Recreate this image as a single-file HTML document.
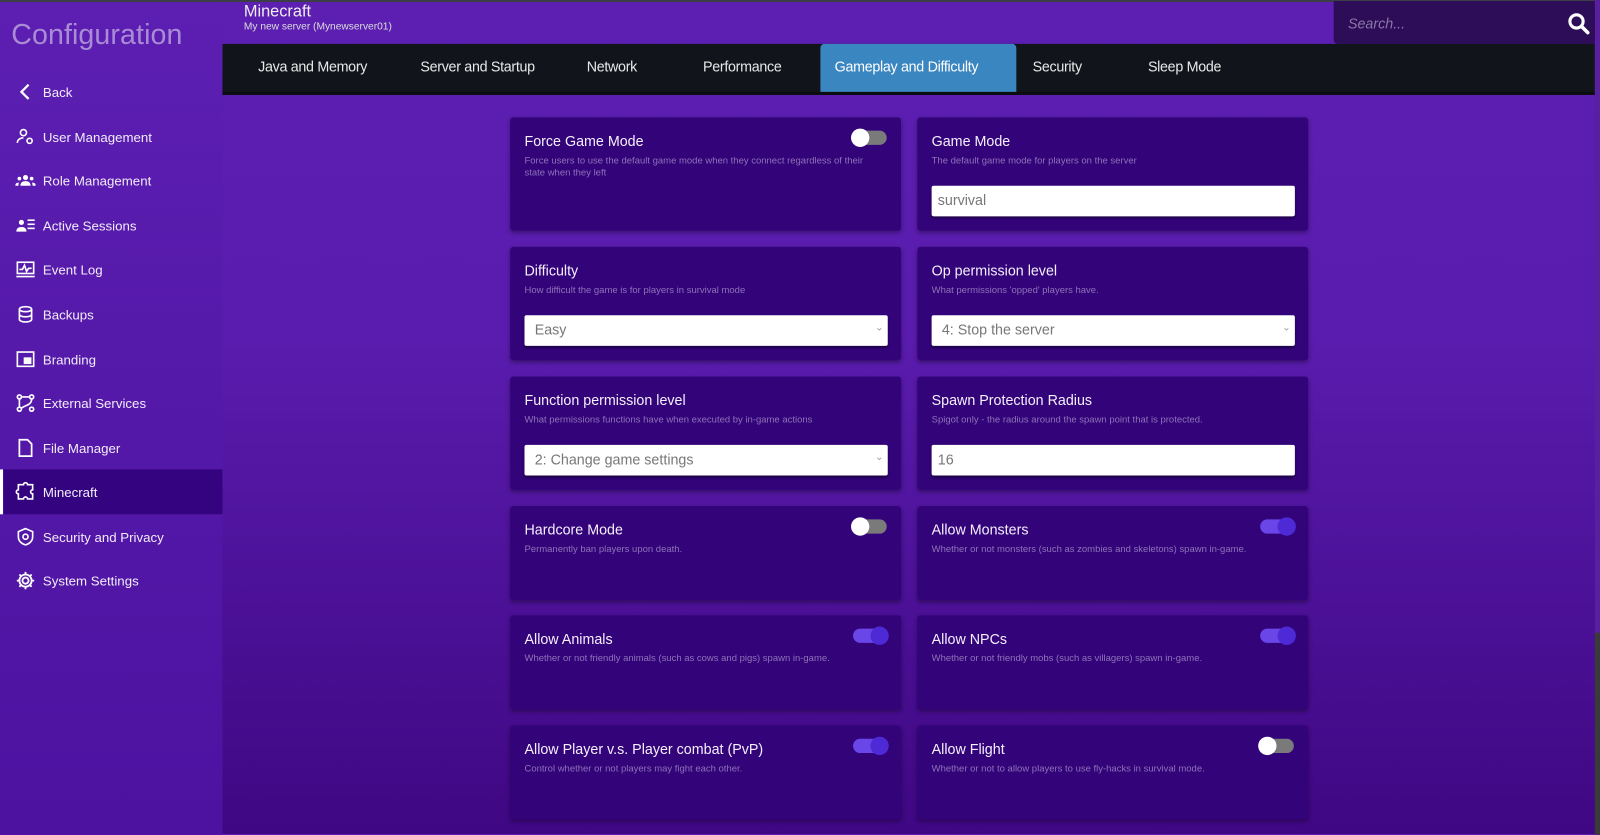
<!DOCTYPE html>
<html><head><meta charset="utf-8"><style>
*{box-sizing:border-box;margin:0;padding:0}
html,body{width:1600px;height:834px;overflow:hidden}
body{font-family:"Liberation Sans",sans-serif;background:linear-gradient(#5c1fb2 0%,#5a1cae 40%,#3f0783 100%);color:#fff}
#w{position:absolute;left:0;top:0;width:1568px;height:818px;transform:scale(1.0204);transform-origin:0 0}
.topline{position:absolute;left:0;top:0;width:1568px;height:2px;background:#3d3d48}
.sb{position:absolute;left:0;top:0;width:218px;height:818px;background:linear-gradient(#5c1fb2,#4d12a0)}
.cfg{position:absolute;left:11px;top:18px;font-size:28px;color:#a98bd6;letter-spacing:.1px;font-weight:300}
.nav{position:absolute;left:0;width:218px;height:44px;display:flex;align-items:center;font-size:13px;color:#f2ecfa}
.nav svg{position:absolute;left:15px;width:20px;height:20px}
.nav span{position:absolute;left:42px}
.nav.act{background:#340480;border-left:3px solid #fff}
.hdr1{position:absolute;left:239px;top:3px;font-size:16px;color:#eee}
.hdr2{position:absolute;left:239px;top:21px;font-size:10px;color:#ddd}
.search{position:absolute;left:1307px;top:1px;width:261px;height:42px;background:#2d0c58;border-radius:0 0 0 4px}
.search i{position:absolute;left:14px;top:14px;font-size:14px;color:#8b78a8}
.tabs{position:absolute;left:218px;top:43px;width:1345px;height:50px;background:#11151b;border-bottom:3px solid #0b0d10}
.tab{position:absolute;top:0;height:47px;font-size:14px;color:#e8e8e8;line-height:44px;letter-spacing:-.3px}
.tab.a{background:#3a86c0;border-radius:4px 4px 0 0;color:#fff}
.scroll{position:absolute;left:1563px;top:0;width:5px;height:818px;background:#58209f}
.scroll b{position:absolute;left:0;width:5px;background:#3a3a3a}
.card{position:absolute;width:383px;background:#33037a;border-radius:3px;box-shadow:0 2px 4px rgba(0,0,0,.35)}
.card h3{position:absolute;left:14px;top:15px;font-size:14px;font-weight:normal;color:#f5f0fb}
.card p{position:absolute;left:14px;top:36px;right:24px;font-size:9.3px;line-height:12px;color:#8f73b8}
.inp{position:absolute;left:14px;top:67px;width:356px;height:30px;background:#fff;border-radius:2px;font-size:14px;color:#777;padding:6px 10px;box-shadow:0 2px 2px rgba(0,0,0,.4)}
.inp .c{position:absolute;right:4px;top:7px;font-size:10px;color:#999}
.tg{position:absolute;right:14px;top:13px;width:33px;height:14px;border-radius:7px}
.tg.off{background:#7a7a7a}
.tg.off::after{content:"";position:absolute;left:-2px;top:-2px;width:18px;height:18px;border-radius:50%;background:#fff}
.tg.on{background:#6a46e8}
.tg.on::after{content:"";position:absolute;right:-2px;top:-2px;width:18px;height:18px;border-radius:50%;background:#4d2ad6}
</style></head><body><div id="w">
<div class="sb"></div>
<div class="topline"></div>
<div class="cfg">Configuration</div>
<div class="nav" style="top:68px"><svg viewBox="0 0 20 20"><path d="M13 3 6 10l7 7" stroke="#fff" stroke-width="2.2" fill="none"/></svg><span>Back</span></div>
<div class="nav" style="top:112px"><svg viewBox="0 0 20 20" fill="none" stroke="#fff" stroke-width="1.6"><circle cx="8" cy="6" r="3"/><path d="M2 16c0-3 3-5 6-5"/><circle cx="14" cy="14" r="2.5"/></svg><span>User Management</span></div>
<div class="nav" style="top:155px"><svg viewBox="0 0 20 20" fill="#fff"><circle cx="10" cy="7" r="2.5"/><circle cx="4" cy="8" r="1.8"/><circle cx="16" cy="8" r="1.8"/><path d="M5 15c0-3 2-4.5 5-4.5s5 1.5 5 4.5zM0 15c0-2 1-3 3.5-3L3 15zM20 15c0-2-1-3-3.5-3L17 15z"/></svg><span>Role Management</span></div>
<div class="nav" style="top:199px"><svg viewBox="0 0 20 20" fill="#fff"><circle cx="6" cy="7" r="2.5"/><path d="M1 16c0-3 2-4.5 5-4.5s5 1.5 5 4.5z"/><rect x="12" y="4" width="7" height="1.6"/><rect x="12" y="8" width="7" height="1.6"/><rect x="12" y="12" width="7" height="1.6"/></svg><span>Active Sessions</span></div>
<div class="nav" style="top:242px"><svg viewBox="0 0 20 20" fill="none" stroke="#fff" stroke-width="1.6"><rect x="2" y="3" width="16" height="11"/><path d="M4 10h3l2-4 2 6 2-3h3M1 17h18"/></svg><span>Event Log</span></div>
<div class="nav" style="top:286px"><svg viewBox="0 0 20 20" fill="none" stroke="#fff" stroke-width="1.6"><ellipse cx="10" cy="5" rx="6" ry="2.5"/><path d="M4 5v10c0 1.4 2.7 2.5 6 2.5s6-1.1 6-2.5V5M4 10c0 1.4 2.7 2.5 6 2.5s6-1.1 6-2.5"/></svg><span>Backups</span></div>
<div class="nav" style="top:330px"><svg viewBox="0 0 20 20" fill="none" stroke="#fff" stroke-width="1.6"><rect x="2" y="3" width="16" height="14"/><rect x="9" y="9" width="6" height="5" fill="#fff"/></svg><span>Branding</span></div>
<div class="nav" style="top:373px"><svg viewBox="0 0 20 20" fill="none" stroke="#fff" stroke-width="1.6"><circle cx="4" cy="4" r="2"/><circle cx="16" cy="4" r="2"/><circle cx="4" cy="16" r="2"/><circle cx="16" cy="16" r="2"/><path d="M4 6v8M6 4h8M16 6c0 6-6 6-10 9"/></svg><span>External Services</span></div>
<div class="nav" style="top:417px"><svg viewBox="0 0 20 20" fill="none" stroke="#fff" stroke-width="1.7"><path d="M4 2h8l4 4v12H4z"/></svg><span>File Manager</span></div>
<div class="nav act" style="top:460px"><svg viewBox="0 0 20 20" fill="none" stroke="#fff" stroke-width="1.6" style="left:12px"><path d="M3 3h5a2 2 0 0 1 4 0h5v5a2 2 0 0 0 0 4v5h-5a2 2 0 0 0-4 0H3v-5a2 2 0 0 1 0-4z"/></svg><span style="left:39px">Minecraft</span></div>
<div class="nav" style="top:504px"><svg viewBox="0 0 20 20" fill="none" stroke="#fff" stroke-width="1.6"><path d="M10 2l7 3v5c0 4-3 7-7 8-4-1-7-4-7-8V5z"/><circle cx="10" cy="10" r="2.5"/></svg><span>Security and Privacy</span></div>
<div class="nav" style="top:547px"><svg viewBox="0 0 20 20" fill="none" stroke="#fff" stroke-width="1.8"><circle cx="10" cy="10" r="3"/><path d="M10 1.5v3M10 15.5v3M1.5 10h3M15.5 10h3M4 4l2 2M14 14l2 2M4 16l2-2M14 6l2-2"/><circle cx="10" cy="10" r="6"/></svg><span>System Settings</span></div>

<div class="hdr1">Minecraft</div>
<div class="hdr2">My new server (Mynewserver01)</div>
<div class="search"><i>Search...</i><svg style="position:absolute;left:229px;top:11px" width="22" height="22" viewBox="0 0 22 22"><circle cx="9" cy="9" r="6.5" stroke="#fff" stroke-width="3" fill="none"/><path d="M14 14l6 6" stroke="#fff" stroke-width="3.5" stroke-linecap="round"/></svg></div>
<div class="tabs">
<div class="tab" style="left:35px">Java and Memory</div>
<div class="tab" style="left:194px">Server and Startup</div>
<div class="tab" style="left:357px">Network</div>
<div class="tab" style="left:471px">Performance</div>
<div class="tab a" style="left:586px;width:192px;padding-left:14px">Gameplay and Difficulty</div>
<div class="tab" style="left:794px">Security</div>
<div class="tab" style="left:907px">Sleep Mode</div>
</div>
<div class="scroll"><b style="top:620px;height:198px"></b></div>

<div class="card" style="left:500px;top:115px;height:111px"><h3>Force Game Mode</h3><p>Force users to use the default game mode when they connect regardless of their state when they left</p><div class="tg off"></div></div>
<div class="card" style="left:899px;top:115px;height:111px"><h3>Game Mode</h3><p>The default game mode for players on the server</p><div class="inp" style="padding-left:6px">survival</div></div>
<div class="card" style="left:500px;top:242px;height:111px"><h3>Difficulty</h3><p>How difficult the game is for players in survival mode</p><div class="inp">Easy<span class="c">&#8964;</span></div></div>
<div class="card" style="left:899px;top:242px;height:111px"><h3>Op permission level</h3><p>What permissions 'opped' players have.</p><div class="inp">4: Stop the server<span class="c">&#8964;</span></div></div>
<div class="card" style="left:500px;top:369px;height:111px"><h3>Function permission level</h3><p>What permissions functions have when executed by in-game actions</p><div class="inp">2: Change game settings<span class="c">&#8964;</span></div></div>
<div class="card" style="left:899px;top:369px;height:111px"><h3>Spawn Protection Radius</h3><p>Spigot only - the radius around the spawn point that is protected.</p><div class="inp" style="padding-left:6px">16</div></div>
<div class="card" style="left:500px;top:496px;height:92px"><h3>Hardcore Mode</h3><p>Permanently ban players upon death.</p><div class="tg off"></div></div>
<div class="card" style="left:899px;top:496px;height:92px"><h3>Allow Monsters</h3><p>Whether or not monsters (such as zombies and skeletons) spawn in-game.</p><div class="tg on"></div></div>
<div class="card" style="left:500px;top:603px;height:92px"><h3>Allow Animals</h3><p>Whether or not friendly animals (such as cows and pigs) spawn in-game.</p><div class="tg on"></div></div>
<div class="card" style="left:899px;top:603px;height:92px"><h3>Allow NPCs</h3><p>Whether or not friendly mobs (such as villagers) spawn in-game.</p><div class="tg on"></div></div>
<div class="card" style="left:500px;top:711px;height:92px"><h3>Allow Player v.s. Player combat (PvP)</h3><p>Control whether or not players may fight each other.</p><div class="tg on"></div></div>
<div class="card" style="left:899px;top:711px;height:92px"><h3>Allow Flight</h3><p>Whether or not to allow players to use fly-hacks in survival mode.</p><div class="tg off"></div></div>
</div></body></html>
